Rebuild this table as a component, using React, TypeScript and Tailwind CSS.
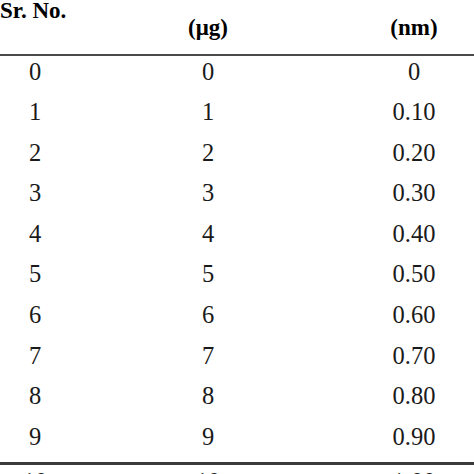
const rows = [
  ["0", "0", "0"],
  ["1", "1", "0.10"],
  ["2", "2", "0.20"],
  ["3", "3", "0.30"],
  ["4", "4", "0.40"],
  ["5", "5", "0.50"],
  ["6", "6", "0.60"],
  ["7", "7", "0.70"],
  ["8", "8", "0.80"],
  ["9", "9", "0.90"],
];

export default function App() {
  return (
    <div className="h-[474px] w-[474px] overflow-hidden bg-white text-[#1a1a1a] font-['Liberation_Serif',serif]">
      <div className="flex h-[56px] flex-col border-b-2 border-[#4a4a4a] font-bold text-black">
        <div className="h-[20px] text-[23px] leading-[22px]">Sr. No.</div>
        <div className="grid grid-cols-[70px_276px_128px] text-[23px] leading-[16px]">
          <div></div>
          <div className="text-center">(μg)</div>
          <div className="pl-2 text-center">(nm)</div>
        </div>
      </div>
      <div className="flex flex-col">
        {rows.map((r, i) => (
          <div key={i} className="grid h-[40.6px] grid-cols-[70px_276px_128px] pt-[3.5px] text-[24.5px] leading-6">
            <div className="text-center">{r[0]}</div>
            <div className="text-center">{r[1]}</div>
            <div className="pl-2 text-center">{r[2]}</div>
          </div>
        ))}
        <div className="grid h-[40px] grid-cols-[70px_276px_128px] border-t-[3px] border-[#3a3a3a] pt-[5px] text-[24.5px] leading-6">
          <div className="text-center">10</div>
          <div className="text-center">10</div>
          <div className="pl-2 text-center">1.00</div>
        </div>
      </div>
    </div>
  );
}
